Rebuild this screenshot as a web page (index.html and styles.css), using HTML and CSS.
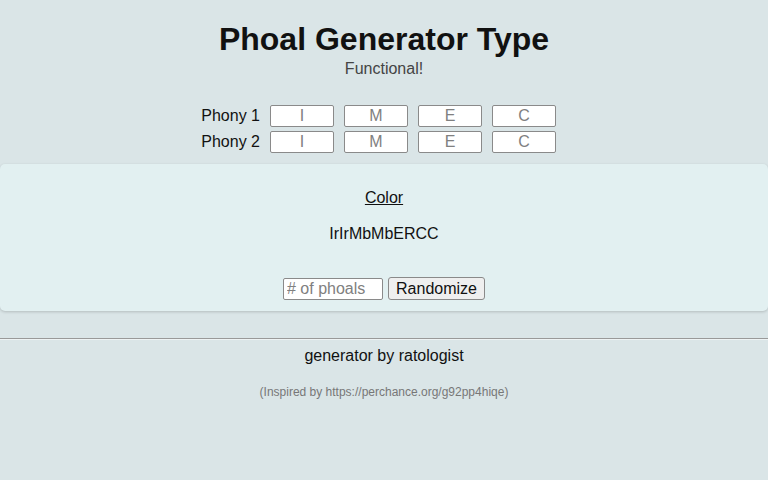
FILE: index.html
```html
<!DOCTYPE html>
<html>
<head>
<meta charset="utf-8">
<link rel="stylesheet" href="styles.css">
</head>
<body>
<header class="head">
  <h1 class="title">Phoal Generator Type</h1>
  <div class="subtitle">Functional!</div>
</header>
<div class="phonies">
  <div class="row">
    <span class="label">Phony 1</span>
    <input class="slot" placeholder="I">
    <input class="slot" placeholder="M">
    <input class="slot" placeholder="E">
    <input class="slot" placeholder="C">
  </div>
  <div class="row">
    <span class="label">Phony 2</span>
    <input class="slot" placeholder="I">
    <input class="slot" placeholder="M">
    <input class="slot" placeholder="E">
    <input class="slot" placeholder="C">
  </div>
</div>
<section class="panel">
  <div class="heading">Color</div>
  <div class="result">IrIrMbMbERCC</div>
  <div class="controls">
    <input class="count" placeholder="# of phoals">
    <button class="btn">Randomize</button>
  </div>
</section>
<hr class="rule">
<div class="credit">generator by ratologist</div>
<div class="inspired">(Inspired by https://perchance.org/g92pp4hiqe)</div>
</body>
</html>
```

FILE: styles.css
```css
html, body {
  margin: 0;
  padding: 0;
  background: #dae5e7;
  font-family: "Liberation Sans", Arial, sans-serif;
  color: #111;
}
.head {
  text-align: center;
  padding-top: 21px;
}
.title {
  margin: 0;
  font-size: 32px;
  line-height: 37px;
  font-weight: bold;
}
.subtitle {
  font-size: 16px;
  line-height: 18px;
  color: #444;
  margin-top: 2px;
}
.phonies {
  display: flex;
  flex-direction: column;
  align-items: center;
  gap: 4px;
  margin-top: 27px;
  padding-left: 1px;
  padding-right: 8px;
}
.row {
  display: flex;
  align-items: center;
  height: 22px;
}
.label {
  font-size: 16px;
  width: 60px;
  margin-right: 5px;
  text-align: right;
  color: #111;
}
.slot {
  box-sizing: border-box;
  width: 64px;
  height: 22px;
  margin: 0 5px;
  border: 1px solid #8a8a8a;
  border-radius: 2px;
  background: #fff;
  font-family: "Liberation Sans", Arial, sans-serif;
  font-size: 16px;
  text-align: center;
  padding: 0;
}
.slot::placeholder { color: #808080; }
.panel {
  margin-top: 11px;
  background: #e2f0f1;
  border-radius: 5px;
  box-shadow: 0 1px 3px rgba(0,0,0,0.18);
  padding: 25px 0 11px;
  text-align: center;
}
.heading {
  font-size: 16px;
  line-height: 18px;
  text-decoration: underline;
}
.result {
  font-size: 16px;
  line-height: 18px;
  margin-top: 18px;
}
.controls {
  display: flex;
  justify-content: center;
  align-items: center;
  gap: 5px;
  margin-top: 34px;
}
.count {
  box-sizing: border-box;
  width: 100px;
  height: 22px;
  border: 1px solid #8a8a8a;
  border-radius: 2px;
  background: #fff;
  font-family: "Liberation Sans", Arial, sans-serif;
  font-size: 16px;
  padding: 0 3px;
}
.count::placeholder { color: #808080; }
.btn {
  box-sizing: border-box;
  height: 23px;
  width: 97px;
  border: 1px solid #8a8a8a;
  border-radius: 3px;
  background: #efefef;
  font-family: "Liberation Sans", Arial, sans-serif;
  font-size: 16px;
  color: #111;
  padding: 0 6px;
}
.rule {
  margin: 27px 0 0;
  border: 0;
  border-top: 1px solid #999;
  border-bottom: 1px solid #eef3f4;
  height: 0;
}
.credit {
  text-align: center;
  font-size: 16px;
  line-height: 18px;
  margin-top: 7px;
}
.inspired {
  text-align: center;
  font-size: 12px;
  line-height: 14px;
  color: #777;
  margin-top: 20px;
}
```
